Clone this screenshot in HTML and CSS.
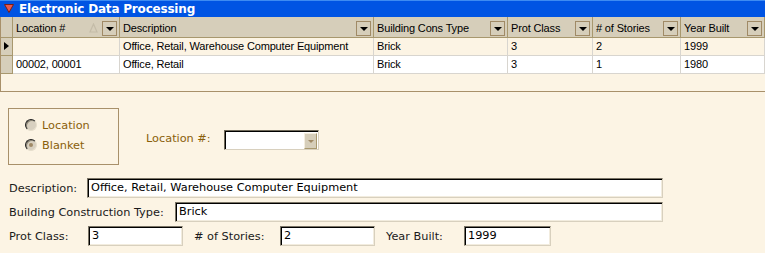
FILE: index.html
```html
<!DOCTYPE html>
<html>
<head>
<meta charset="utf-8">
<link rel="stylesheet" href="styles.css">
</head>
<body>
<div class="title">
  <svg class="tri" width="10" height="9" viewBox="0 0 10 9"><polygon points="0.5,0.5 9.5,0.5 5,8.5" fill="#E85A50" stroke="#7A1E18" stroke-width="1"/></svg>
  <span class="title-text">Electronic Data Processing</span>
</div>
<div class="grid">
  <div class="row head">
    <div class="rh"></div>
    <div class="hc"><span class="ht">Location #</span><svg class="sort" width="9" height="10" viewBox="0 0 9 10"><polygon points="4.5,1 8,9 1,9" fill="none" stroke="#C4BCA8" stroke-width="1.2"/></svg><span class="dd"></span></div>
    <div class="hc"><span class="ht">Description</span><span class="dd"></span></div>
    <div class="hc"><span class="ht">Building Cons Type</span><span class="dd"></span></div>
    <div class="hc"><span class="ht">Prot Class</span><span class="dd"></span></div>
    <div class="hc"><span class="ht"># of Stories</span><span class="dd"></span></div>
    <div class="hc"><span class="ht">Year Built</span><span class="dd"></span></div>
  </div>
  <div class="row body sel">
    <div class="rh"><span class="cur"></span></div>
    <div class="c"></div>
    <div class="c">Office, Retail, Warehouse Computer Equipment</div>
    <div class="c">Brick</div>
    <div class="c">3</div>
    <div class="c">2</div>
    <div class="c">1999</div>
  </div>
  <div class="row body">
    <div class="rh"></div>
    <div class="c">00002, 00001</div>
    <div class="c">Office, Retail</div>
    <div class="c">Brick</div>
    <div class="c">3</div>
    <div class="c">1</div>
    <div class="c">1980</div>
  </div>
</div>
<div class="lower">
  <div class="top-row">
    <div class="group">
      <div class="radio-line"><span class="radio"></span><span class="rlabel">Location</span></div>
      <div class="radio-line"><span class="radio on"></span><span class="rlabel">Blanket</span></div>
    </div>
    <span class="loc-label">Location #:</span>
    <div class="combo"><span class="combo-btn"></span></div>
  </div>
  <div class="frow">
    <span class="lab w-desc">Description:</span>
    <div class="inp w576">Office, Retail, Warehouse Computer Equipment</div>
  </div>
  <div class="frow">
    <span class="lab w-bld">Building Construction Type:</span>
    <div class="inp w488">Brick</div>
  </div>
  <div class="frow">
    <span class="lab w-prot">Prot Class:</span>
    <div class="inp w95">3</div>
    <span class="lab w-st gapl">#&nbsp;of Stories:</span>
    <div class="inp w95">2</div>
    <span class="lab w-yb gapl">Year Built:</span>
    <div class="inp w87">1999</div>
  </div>
</div>
</body>
</html>
```
FILE: styles.css
```css
* { box-sizing: border-box; }
html, body { margin: 0; padding: 0; }
body {
  width: 765px;
  height: 253px;
  overflow: hidden;
  background: #FCF4E4;
  font-family: "DejaVu Sans", Verdana, sans-serif;
}
.title {
  height: 17px;
  background: #0054E3;
  border-top: 1px solid #3D8BF2;
  display: flex;
  align-items: center;
  padding-left: 4px;
}
.tri { display: block; margin-top: -1px; }
.title-text {
  color: #fff;
  font-weight: bold;
  font-size: 12px;
  letter-spacing: -0.2px;
  margin-left: 5px;
  line-height: 14px;
}
.grid {
  height: 74px;
  border-left: 1px solid #A8906A;
  border-bottom: 1px solid #A8906A;
  box-sizing: content-box;
  font-family: "Liberation Sans", Arial, sans-serif;
  font-size: 11px;
  letter-spacing: -0.15px;
  color: #000;
}
.row {
  display: grid;
  grid-template-columns: 12px 107px 254px 134px 85px 88px 1fr;
}
.row.head { height: 21px; }
.row.body { height: 18px; background: #fff; }
.row.body.sel { background: #FCF4E4; }
.rh {
  background: #D6CEBA;
  border-right: 1px solid #A8986E;
  border-bottom: 1px solid #A8986E;
  position: relative;
}
.cur {
  position: absolute;
  left: 3px;
  top: 4px;
  width: 0;
  height: 0;
  border-top: 4.5px solid transparent;
  border-bottom: 4.5px solid transparent;
  border-left: 5px solid #000;
}
.hc {
  background: #D6CEBA;
  border-right: 1px solid #A8986E;
  border-bottom: 1px solid #A8986E;
  display: flex;
  align-items: center;
  padding-left: 3px;
  padding-right: 2px;
}
.ht { flex: 1; white-space: nowrap; overflow: hidden; padding-top: 1px; }
.sort { display: block; margin-right: 4px; margin-top: 1px; }
.dd {
  width: 15px;
  height: 15px;
  border: 1px solid #A08A66;
  background: #D6CEBA;
  display: flex;
  align-items: center;
  justify-content: center;
  margin-top: 3px;
}
.dd::before {
  content: "";
  width: 0;
  height: 0;
  border-left: 4px solid transparent;
  border-right: 4px solid transparent;
  border-top: 4px solid #000;
}
.c {
  border-right: 1px solid #D8D5CF;
  border-bottom: 1px solid #D8D5CF;
  padding-left: 3px;
  line-height: 17px;
  white-space: nowrap;
  overflow: hidden;
}
.lower {
  padding: 16px 0 0 8px;
  font-size: 11.3px;
  color: #1A1A1A;
}
.top-row {
  display: flex;
  align-items: flex-start;
}
.group {
  width: 111px;
  height: 57px;
  border: 1px solid #A8906A;
  padding: 10px 0 0 16px;
  display: flex;
  flex-direction: column;
  gap: 8px;
}
.radio-line { display: flex; align-items: center; height: 12px; }
.radio {
  width: 12px;
  height: 12px;
  border-radius: 50%;
  border: 1px solid;
  border-color: #202020 #E6DECC #E6DECC #202020;
  background: #D8D0C0;
  box-shadow: inset 1px 1px 0 #8C8676;
  display: flex;
  align-items: center;
  justify-content: center;
}
.radio.on::before {
  content: "";
  width: 4px;
  height: 4px;
  border-radius: 50%;
  background: #A08A66;
}
.rlabel { color: #8A5F0A; margin-left: 5px; line-height: 12px; padding-top: 1px; }
.loc-label {
  color: #8A5F0A;
  margin-left: 27px;
  margin-top: 24px;
  width: 78px;
}
.combo {
  width: 95px;
  height: 20px;
  margin-top: 22px;
  border: 1px solid;
  border-color: #6E6858 #D8D0BE #D8D0BE #6E6858;
  background: #fff;
  box-shadow: inset 1px 1px 0 #000;
  display: flex;
  justify-content: flex-end;
  padding: 2px 1px 1px 2px;
}
.combo-btn {
  width: 13px;
  height: 16px;
  background: #D6CEBA;
  border: 1px solid;
  border-color: #F4EEE0 #A8986E #A8986E #F4EEE0;
  display: flex;
  align-items: center;
  justify-content: center;
}
.combo-btn::before {
  content: "";
  border-left: 3px solid transparent;
  border-right: 3px solid transparent;
  border-top: 3px solid #A08A66;
}
.frow {
  display: flex;
  align-items: center;
  padding-left: 1px;
  height: 20px;
  margin-top: 4px;
}
.top-row + .frow { margin-top: 13px; }
.lab { white-space: nowrap; }
.w-desc { width: 78px; }
.w-bld { width: 166px; }
.w-prot { width: 79px; }
.w-st { width: 86px; }
.w-yb { width: 78px; }
.gapl { margin-left: 11px; }
.inp {
  height: 20px;
  border: 1px solid;
  border-color: #7A7466 #D8D0BE #D8D0BE #7A7466;
  background: #fff;
  box-shadow: inset 1px 1px 0 #000, inset -1px -1px 0 #F2ECDE;
  padding-left: 3px;
  line-height: 18px;
  color: #000;
  white-space: nowrap;
  overflow: hidden;
}
.w576 { width: 576px; }
.w488 { width: 488px; }
.w95 { width: 95px; }
.w87 { width: 87px; }
```
